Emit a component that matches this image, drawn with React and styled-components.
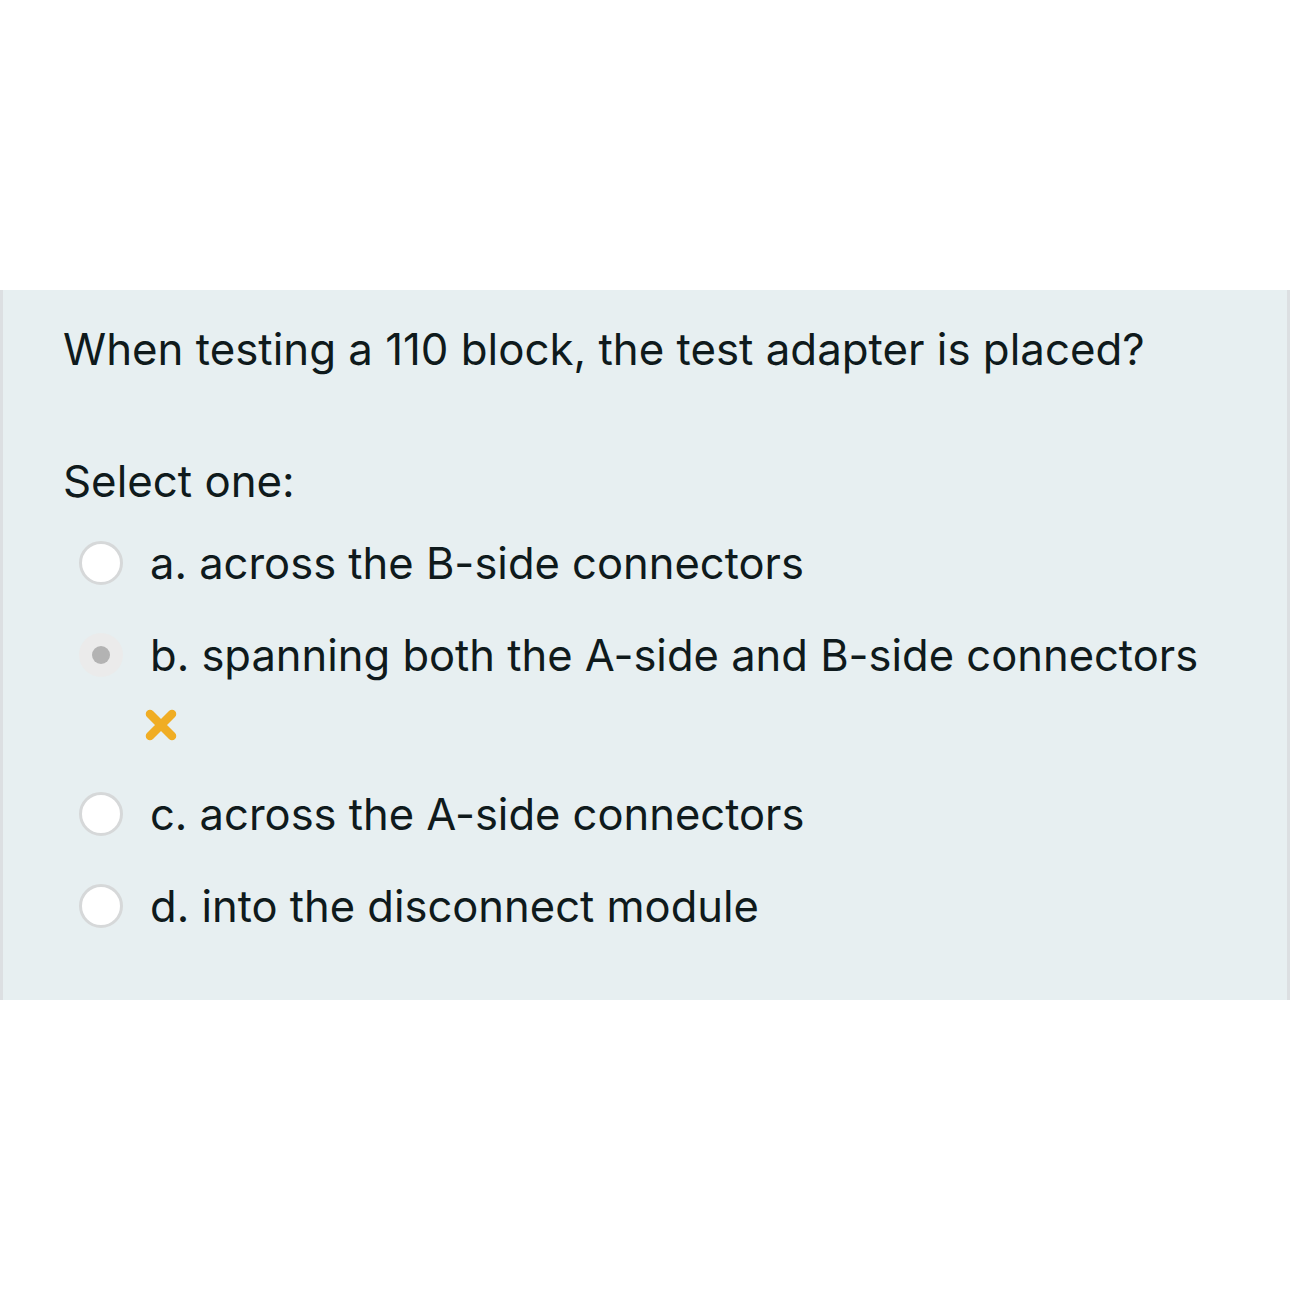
import React from "react";
import styled, { createGlobalStyle } from "styled-components";

const Global = createGlobalStyle`
  html, body { margin: 0; padding: 0; background: #ffffff; }
  body { font-family: Inter, "Noto Sans", sans-serif; }
`;

const Page = styled.div`
  width: 1290px;
  height: 1290px;
  display: flex;
  flex-direction: column;
  padding-top: 290px;
  box-sizing: border-box;
`;

const Panel = styled.div`
  background: #e7eff1;
  border-left: 3px solid #dcdfe2;
  border-right: 3px solid #dcdfe2;
  height: 710px;
  box-sizing: border-box;
  padding: 24px 0 0 60px;
  color: #0f1a1c;
`;

const Question = styled.div`
  font-size: 43.8px;
  line-height: 72px;
`;

const Prompt = styled.div`
  font-size: 43.8px;
  line-height: 72px;
  margin-top: 60px;
`;

const Options = styled.div`
  display: flex;
  flex-direction: column;
  padding-left: 16px;
  margin-top: -1px;
`;

const Option = styled.div`
  display: flex;
  align-items: center;
  gap: 27px;
  height: 92px;
`;

const Radio = styled.span`
  width: 44px;
  height: 44px;
  border-radius: 50%;
  box-sizing: border-box;
  flex: none;
  display: flex;
  align-items: center;
  justify-content: center;
  background: ${(p) => (p.$checked ? "#ebebeb" : "#ffffff")};
  border: ${(p) => (p.$checked ? "none" : "3px solid #d6d8d9")};
`;

const Dot = styled.span`
  width: 18px;
  height: 18px;
  border-radius: 50%;
  background: #b3b3b3;
`;

const Label = styled.span`
  font-size: 43.5px;
  line-height: 56px;
`;

const Feedback = styled.div`
  height: 40px;
  padding-left: 64px;
  display: flex;
  align-items: flex-start;
  margin-top: 6px;
  margin-bottom: 21px;
`;

const options = [
  { key: "a", text: "a. across the B-side connectors" },
  { key: "b", text: "b. spanning both the A-side and B-side connectors", checked: true },
  { key: "c", text: "c. across the A-side connectors" },
  { key: "d", text: "d. into the disconnect module" },
];

export default function App() {
  return (
    <>
      <Global />
      <Page>
        <Panel>
          <Question>When testing a 110 block, the test adapter is placed?</Question>
          <Prompt>Select one:</Prompt>
          <Options>
            {options.map((o) => (
              <React.Fragment key={o.key}>
                <Option>
                  <Radio $checked={o.checked}>{o.checked && <Dot />}</Radio>
                  <Label>{o.text}</Label>
                </Option>
                {o.checked && (
                  <Feedback>
                    <svg width="36" height="36" viewBox="0 0 36 36">
                      <path d="M7 7 L29 29 M29 7 L7 29" stroke="#f0ad24" strokeWidth="8.5" strokeLinecap="round" />
                    </svg>
                  </Feedback>
                )}
              </React.Fragment>
            ))}
          </Options>
        </Panel>
      </Page>
    </>
  );
}
